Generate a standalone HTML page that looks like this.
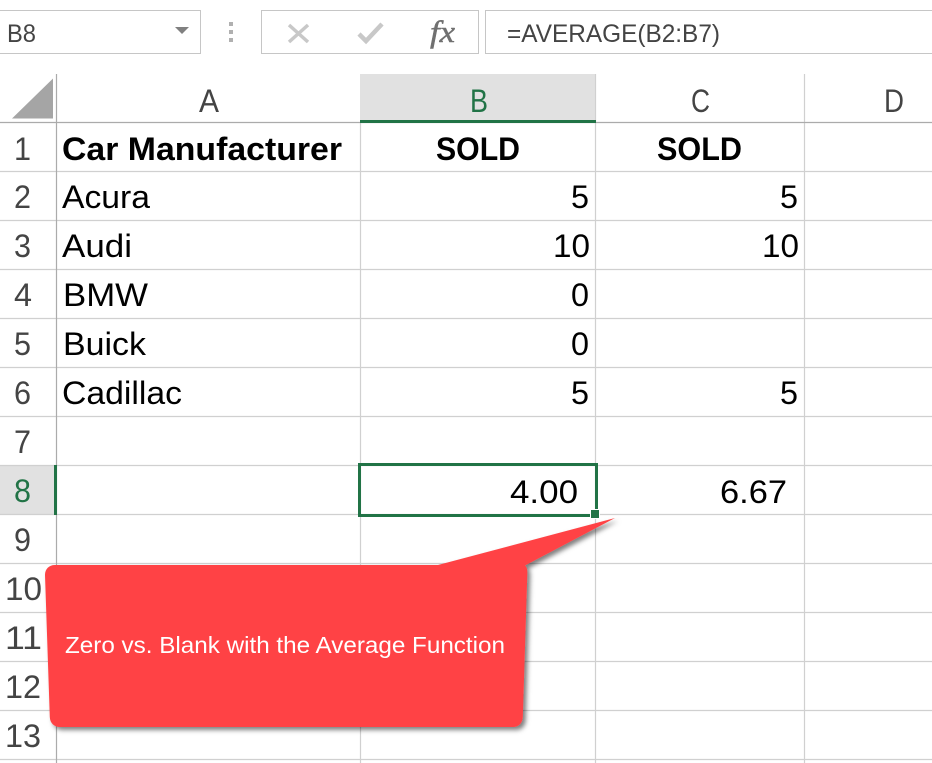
<!DOCTYPE html>
<html><head><meta charset="utf-8"><style>
html,body{margin:0;padding:0;background:#fff;width:932px;height:763px;overflow:hidden}
svg{display:block}
text{font-family:"Liberation Sans",sans-serif}
.c{font-size:32px;fill:#000}
.b{font-size:32px;fill:#000;font-weight:bold}
.h{font-size:32px;fill:#444}
.g{font-size:32px;fill:#217346}
</style></head><body>
<svg width="932" height="763" viewBox="0 0 932 763" xmlns="http://www.w3.org/2000/svg">
<defs><filter id="s" x="-10%" y="-10%" width="120%" height="130%"><feDropShadow dx="3" dy="3" stdDeviation="2.5" flood-color="#000" flood-opacity=".5"/></filter></defs>
<rect width="932" height="763" fill="#fff"/>
<!-- formula bar -->
<g fill="#fff" stroke="#c6c6c6" stroke-width="1">
<rect x="-5" y="10.5" width="205.500" height="43"/>
<rect x="261.500" y="10.500" width="217" height="43"/>
<rect x="485.500" y="10.500" width="460" height="43"/>
</g>
<text x="7" y="42" font-size="25" fill="#444" textLength="29" lengthAdjust="spacingAndGlyphs">B8</text>
<path d="M175 27H189L182 34Z" fill="#808080"/>
<g fill="#b0b0b0"><rect x="229" y="22" width="4" height="4"/><rect x="229" y="30" width="4" height="4"/><rect x="229" y="38" width="4" height="4"/></g>
<path d="M289 25L308 42M308 25L289 42" stroke="#c8c8c8" stroke-width="3.500" fill="none"/>
<path d="M359 34L366 41L382 24" stroke="#c8c8c8" stroke-width="4.500" fill="none"/>
<text x="430" y="42" font-size="31" fill="#707070" stroke="#707070" stroke-width=".5" style="font-family:'Liberation Serif',serif;font-style:italic" textLength="25" lengthAdjust="spacingAndGlyphs">fx</text>
<text x="507" y="42" font-size="25" fill="#444" textLength="213" lengthAdjust="spacingAndGlyphs">=AVERAGE(B2:B7)</text>
<!-- headers bg -->
<rect x="360" y="74" width="235" height="47" fill="#e1e1e1"/>
<rect x="0" y="465" width="55" height="49" fill="#e1e1e1"/>
<path d="M12 118.500L53 78.500V118.500Z" fill="#a5a5a5"/>
<!-- grid -->
<g stroke="#d0d0d0" stroke-width="1.200">
<path d="M0 171.500H932M0 220.500H932M0 269.500H932M0 318.500H932M0 367.500H932M0 416.500H932M0 465.500H932M0 514.500H932M0 563.500H932M0 612.500H932M0 661.500H932M0 710.500H932M0 759.500H932"/>
<path d="M360.500 122V763M595.500 74V763M804.500 74V763"/>
</g>
<path d="M0 122.500H932M56.500 74V763" stroke="#ababab" stroke-width="1.200"/>
<rect x="360" y="120" width="236" height="3" fill="#217346"/>
<rect x="54" y="465" width="3" height="50" fill="#217346"/>
<!-- column headers -->
<text class="h" x="199" y="112" textLength="20" lengthAdjust="spacingAndGlyphs">A</text>
<text class="g" x="470" y="112" textLength="18" lengthAdjust="spacingAndGlyphs">B</text>
<text class="h" x="691" y="112" textLength="19" lengthAdjust="spacingAndGlyphs">C</text>
<text class="h" x="884" y="112" textLength="20" lengthAdjust="spacingAndGlyphs">D</text>
<!-- row headers -->
<text class="h" x="14" y="160" textLength="17" lengthAdjust="spacingAndGlyphs">1</text>
<text class="h" x="14" y="208" textLength="17" lengthAdjust="spacingAndGlyphs">2</text>
<text class="h" x="14" y="257" textLength="17" lengthAdjust="spacingAndGlyphs">3</text>
<text class="h" x="14" y="306" textLength="18" lengthAdjust="spacingAndGlyphs">4</text>
<text class="h" x="14" y="355" textLength="17" lengthAdjust="spacingAndGlyphs">5</text>
<text class="h" x="14" y="404" textLength="17" lengthAdjust="spacingAndGlyphs">6</text>
<text class="h" x="14" y="453" textLength="17" lengthAdjust="spacingAndGlyphs">7</text>
<text class="g" x="14" y="502" textLength="17" lengthAdjust="spacingAndGlyphs">8</text>
<text class="h" x="14" y="551" textLength="17" lengthAdjust="spacingAndGlyphs">9</text>
<text class="h" x="5" y="600" textLength="37" lengthAdjust="spacingAndGlyphs">10</text>
<text class="h" x="5" y="649" textLength="37" lengthAdjust="spacingAndGlyphs">11</text>
<text class="h" x="5" y="698" textLength="36" lengthAdjust="spacingAndGlyphs">12</text>
<text class="h" x="5" y="747" textLength="36" lengthAdjust="spacingAndGlyphs">13</text>
<!-- cells -->
<text class="b" x="62" y="160" textLength="280" lengthAdjust="spacingAndGlyphs">Car Manufacturer</text>
<text class="b" x="436" y="160" textLength="84" lengthAdjust="spacingAndGlyphs">SOLD</text>
<text class="b" x="657" y="160" textLength="85" lengthAdjust="spacingAndGlyphs">SOLD</text>
<text class="c" x="62" y="208" textLength="88" lengthAdjust="spacingAndGlyphs">Acura</text>
<text class="c" x="62" y="257" textLength="70" lengthAdjust="spacingAndGlyphs">Audi</text>
<text class="c" x="63" y="306" textLength="85" lengthAdjust="spacingAndGlyphs">BMW</text>
<text class="c" x="63" y="355" textLength="83" lengthAdjust="spacingAndGlyphs">Buick</text>
<text class="c" x="62" y="404" textLength="120" lengthAdjust="spacingAndGlyphs">Cadillac</text>
<text class="c" x="571" y="208" textLength="18" lengthAdjust="spacingAndGlyphs">5</text>
<text class="c" x="553" y="257" textLength="37" lengthAdjust="spacingAndGlyphs">10</text>
<text class="c" x="571" y="306" textLength="18" lengthAdjust="spacingAndGlyphs">0</text>
<text class="c" x="571" y="355" textLength="18" lengthAdjust="spacingAndGlyphs">0</text>
<text class="c" x="571" y="404" textLength="18" lengthAdjust="spacingAndGlyphs">5</text>
<text class="c" x="780" y="208" textLength="18" lengthAdjust="spacingAndGlyphs">5</text>
<text class="c" x="762" y="257" textLength="37" lengthAdjust="spacingAndGlyphs">10</text>
<text class="c" x="780" y="404" textLength="18" lengthAdjust="spacingAndGlyphs">5</text>
<text class="c" x="510" y="503" textLength="68" lengthAdjust="spacingAndGlyphs">4.00</text>
<text class="c" x="720" y="503" textLength="67" lengthAdjust="spacingAndGlyphs">6.67</text>
<!-- selection -->
<rect x="359.500" y="464.500" width="237" height="51" fill="none" stroke="#217346" stroke-width="3"/>
<rect x="590" y="509" width="10" height="10" fill="#fff"/>
<rect x="591" y="510" width="8" height="8" fill="#217346"/>
<!-- callout -->
<path filter="url(#s)" fill="#ff4345" d="M55 565H438L615 518L525 565.500C527 567 527.500 570 527.300 574L522.800 717C522.500 723 519 727 513 727H60C54 727 50 723 49.800 717L45 575C45 569 49 565 55 565Z"/>
<text x="65" y="653" font-size="23" fill="#fff" textLength="440" lengthAdjust="spacingAndGlyphs">Zero vs. Blank with the Average Function</text>
</svg>
</body></html>
